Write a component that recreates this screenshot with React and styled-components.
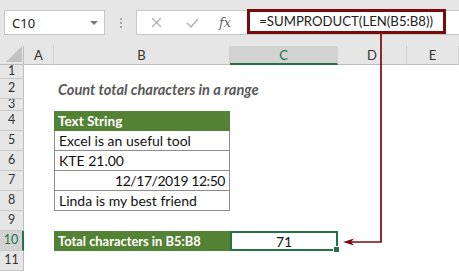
import React from 'react';
import styled, { createGlobalStyle, css } from 'styled-components';

const GlobalStyle = createGlobalStyle`
  html, body {
    margin: 0;
    padding: 0;
    background: #ffffff;
  }
`;

const GREEN = '#548235';
const EXCEL_GREEN = '#217346';
const RED = '#7b0a0a';

const columns = ['A', 'B', 'C', 'D', 'E'];

const rows = [
  { n: 1, cells: {} },
  { n: 2, cells: { B: { text: 'Count total characters in a range', kind: 'title' } } },
  { n: 3, cells: {} },
  { n: 4, cells: { B: { text: 'Text String', kind: 'head' } } },
  { n: 5, cells: { B: { text: 'Excel is an useful tool', kind: 'data' } } },
  { n: 6, cells: { B: { text: 'KTE 21.00', kind: 'data' } } },
  { n: 7, cells: { B: { text: '12/17/2019 12:50', kind: 'data', align: 'right', size: 13 } } },
  { n: 8, cells: { B: { text: 'Linda is my best friend', kind: 'data' } } },
  { n: 9, cells: {} },
  {
    n: 10,
    cells: {
      B: { text: 'Total characters in B5:B8', kind: 'total' },
      C: { text: '71', kind: 'selected' },
    },
  },
  { n: 11, cells: {} },
];

const App = () => {
  return (
    <Sheet>
      <GlobalStyle />
      <Toolbar>
        <NameBox>
          <span>C10</span>
          <Caret />
        </NameBox>
        <Grip>
          <i />
          <i />
          <i />
        </Grip>
        <FormulaBar>
          <BarIcon>
            <svg width='11' height='11' viewBox='0 0 11 11'>
              <path d='M1 1 L10 10 M10 1 L1 10' stroke='#b3b3b3' strokeWidth='1.3' fill='none' />
            </svg>
          </BarIcon>
          <BarIcon>
            <svg width='13' height='10' viewBox='0 0 13 10'>
              <path d='M1 5 L5 9 L12 1' stroke='#b3b3b3' strokeWidth='1.5' fill='none' />
            </svg>
          </BarIcon>
          <Fx>fx</Fx>
          <FormulaInput>=SUMPRODUCT(LEN(B5:B8))</FormulaInput>
        </FormulaBar>
      </Toolbar>

      <Grid>
        <Corner>
          <svg width='16' height='16' viewBox='0 0 16 16'>
            <polygon points='16,0 16,16 0,16' fill='#c2c2c2' />
          </svg>
        </Corner>
        {columns.map((c) => (
          <ColHeader key={c} $active={c === 'C'}>
            {c}
          </ColHeader>
        ))}
        {rows.map((row) => (
          <React.Fragment key={row.n}>
            <RowHeader $active={row.n === 10}>{row.n}</RowHeader>
            {columns.map((c) => {
              const cell = row.cells[c];
              return (
                <Cell key={c} $kind={cell?.kind} $align={cell?.align} $tight={cell?.size}>
                  {cell?.text}
                  {cell?.kind === 'selected' && <FillHandle />}
                </Cell>
              );
            })}
          </React.Fragment>
        ))}
      </Grid>

      <Overlay width='459' height='272' viewBox='0 0 459 272'>
        <path d='M381 34 V242 H350' stroke={RED} strokeWidth='1.7' fill='none' />
        <polygon points='343,242 354,238.5 351,242 354,245.5' fill={RED} />
      </Overlay>
    </Sheet>
  );
};

export default App;

const Sheet = styled.div`
  position: relative;
  width: 459px;
  height: 272px;
  overflow: hidden;
  background: #fff;
  font-family: Lato, 'Open Sans', sans-serif;
`;

const Toolbar = styled.div`
  display: flex;
  align-items: flex-start;
  height: 46px;
  box-sizing: border-box;
  padding: 10px 0 0 4px;
  background: #e6e6e6;
`;

const NameBox = styled.div`
  width: 101px;
  height: 25px;
  box-sizing: border-box;
  border: 1px solid #c6c6c6;
  background: #fff;
  display: flex;
  align-items: center;
  justify-content: space-between;
  padding: 0 6px 0 7px;
  font-family: 'Noto Sans', sans-serif;
  font-size: 13px;
  color: #222;
`;

const Caret = styled.span`
  width: 0;
  height: 0;
  border-left: 4px solid transparent;
  border-right: 4px solid transparent;
  border-top: 4px solid #7a7a7a;
`;

const Grip = styled.div`
  width: 31px;
  height: 25px;
  display: flex;
  flex-direction: column;
  align-items: center;
  justify-content: center;
  gap: 2px;

  i {
    width: 2px;
    height: 2px;
    background: #a6a6a6;
  }
`;

const FormulaBar = styled.div`
  flex: 1;
  height: 25px;
  box-sizing: border-box;
  border: 1px solid #c6c6c6;
  border-right: none;
  background: #fff;
  display: flex;
  align-items: center;
  padding-left: 12px;
`;

const BarIcon = styled.span`
  width: 14px;
  display: flex;
  justify-content: center;
  margin-right: 22px;
`;

const Fx = styled.span`
  font-family: 'DejaVu Serif', serif;
  font-style: italic;
  font-size: 13px;
  color: #666;
  margin-left: -2px;
`;

const FormulaInput = styled.div`
  margin-left: 16px;
  margin-top: -3px;
  width: 199px;
  height: 25px;
  box-sizing: border-box;
  border: 3px solid ${RED};
  display: flex;
  align-items: center;
  padding-left: 9px;
  font-family: Lato, sans-serif;
  font-size: 13.2px;
  color: #222;
  white-space: nowrap;
`;

const Grid = styled.div`
  display: grid;
  grid-template-columns: 24px 30px 176px 108px 69px 52px;
  grid-template-rows: 19px 14px 20px 12px repeat(8, 20px);
`;

const headerBase = css`
  box-sizing: border-box;
  background: #e6e6e6;
  display: flex;
  align-items: center;
  justify-content: center;
  font-family: Lato, sans-serif;
  font-size: 13px;
  color: #333;
  overflow: hidden;
`;

const Corner = styled.div`
  ${headerBase};
  align-items: flex-end;
  justify-content: flex-end;
  padding: 0 1px 2px 0;
  border-bottom: 1px solid #bcbcbc;
  border-right: 1px solid #bcbcbc;
`;

const ColHeader = styled.div`
  ${headerBase};
  border-right: 1px solid #cfcfcf;
  border-bottom: 1px solid #bcbcbc;
  ${(p) =>
    p.$active &&
    css`
      background: #d2d2d2;
      color: ${EXCEL_GREEN};
      border-bottom: 2px solid ${EXCEL_GREEN};
    `}
`;

const RowHeader = styled.div`
  ${headerBase};
  font-size: 12.5px;
  line-height: 1;
  border-right: 1px solid #bcbcbc;
  border-bottom: 1px solid #c8c8c8;
  ${(p) =>
    p.$active &&
    css`
      background: #d2d2d2;
      color: ${EXCEL_GREEN};
      border-right: 2px solid ${EXCEL_GREEN};
    `}
`;

const Cell = styled.div`
  position: relative;
  box-sizing: border-box;
  display: flex;
  align-items: center;
  padding: 0 4px;
  font-size: 14px;
  color: #111;
  white-space: nowrap;
  justify-content: ${(p) => (p.$align === 'right' ? 'flex-end' : 'flex-start')};
  letter-spacing: ${(p) => (p.$tight ? '-0.45px' : 'normal')};

  ${(p) =>
    p.$kind === 'title' &&
    css`
      font-weight: 700;
      font-style: italic;
      font-size: 14.6px;
      color: #595959;
      overflow: visible;
    `}

  ${(p) =>
    p.$kind === 'head' &&
    css`
      background: ${GREEN};
      color: #fff;
      font-weight: 700;
      font-size: 13.5px;
    `}

  ${(p) =>
    p.$kind === 'data' &&
    css`
      border-left: 1px solid #8c8c8c;
      border-right: 1px solid #8c8c8c;
      border-bottom: 1px solid #8c8c8c;
    `}

  ${(p) =>
    p.$kind === 'total' &&
    css`
      background: ${GREEN};
      color: #fff;
      font-weight: 700;
      font-size: 12.9px;
    `}

  ${(p) =>
    p.$kind === 'selected' &&
    css`
      border: 2px solid ${EXCEL_GREEN};
      justify-content: center;
    `}
`;

const FillHandle = styled.span`
  position: absolute;
  right: -4px;
  bottom: -4px;
  width: 5px;
  height: 5px;
  background: ${EXCEL_GREEN};
  border: 1px solid #fff;
`;

const Overlay = styled.svg`
  position: absolute;
  top: 0;
  left: 0;
  pointer-events: none;
`;
